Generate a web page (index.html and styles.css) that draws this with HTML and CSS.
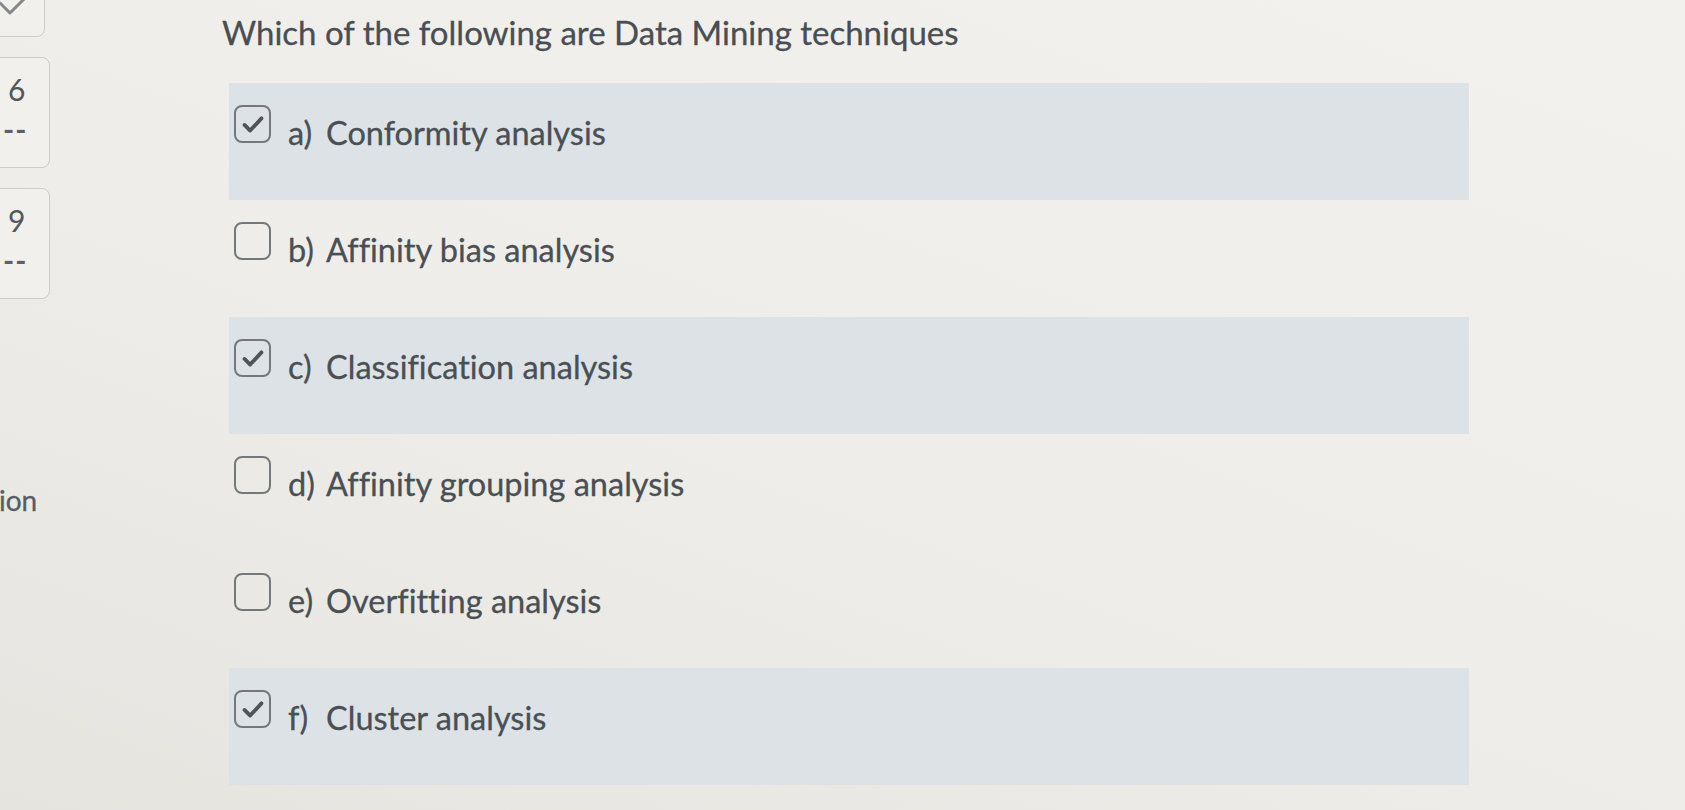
FILE: index.html
```html
<!DOCTYPE html>
<html lang="en">
<head>
  <meta charset="UTF-8">
  <meta name="viewport" content="width=device-width, initial-scale=1.0">
  <title>Quiz Question</title>
  <link rel="stylesheet" href="styles.css">
</head>
<body>
  <div class="page">
    <aside class="rail">
      <div class="qbox qbox-done">
        <svg class="done-mark" width="40" height="30" viewBox="0 0 40 30"><path d="M4 14 L14 24 L34 4" fill="none" stroke="#85878a" stroke-width="3" stroke-linecap="round" stroke-linejoin="round"/></svg>
      </div>
      <div class="qbox">
        <span class="qnum">6</span>
        <span class="qpts">--</span>
      </div>
      <div class="qbox">
        <span class="qnum">9</span>
        <span class="qpts">--</span>
      </div>
      <div class="rail-label">ion</div>
    </aside>

    <main class="question">
      <h1 class="prompt">Which of the following are Data Mining techniques</h1>

      <ul class="choices">
        <li class="choice is-checked">
          <span class="box"><svg width="32" height="32" viewBox="0 0 34 34"><path d="M8 18 L14 24 L26 11" fill="none" stroke="#505357" stroke-width="4" stroke-linecap="round" stroke-linejoin="round"/></svg></span>
          <span class="letter">a)</span>
          <span class="text">Conformity analysis</span>
        </li>
        <li class="choice">
          <span class="box"></span>
          <span class="letter">b)</span>
          <span class="text">Affinity bias analysis</span>
        </li>
        <li class="choice is-checked">
          <span class="box"><svg width="32" height="32" viewBox="0 0 34 34"><path d="M8 18 L14 24 L26 11" fill="none" stroke="#505357" stroke-width="4" stroke-linecap="round" stroke-linejoin="round"/></svg></span>
          <span class="letter">c)</span>
          <span class="text">Classification analysis</span>
        </li>
        <li class="choice">
          <span class="box"></span>
          <span class="letter">d)</span>
          <span class="text">Affinity grouping analysis</span>
        </li>
        <li class="choice">
          <span class="box"></span>
          <span class="letter">e)</span>
          <span class="text">Overfitting analysis</span>
        </li>
        <li class="choice is-checked">
          <span class="box"><svg width="32" height="32" viewBox="0 0 34 34"><path d="M8 18 L14 24 L26 11" fill="none" stroke="#505357" stroke-width="4" stroke-linecap="round" stroke-linejoin="round"/></svg></span>
          <span class="letter">f)</span>
          <span class="text">Cluster analysis</span>
        </li>
      </ul>
    </main>
  </div>
</body>
</html>
```

FILE: styles.css
```css
html, body {
  height: 100%;
}
body {
  margin: 0;
  overflow: hidden;
  font-family: Lato, "Open Sans", Arial, sans-serif;
  font-variant-ligatures: none;
  color: #4a4f54;
  background: linear-gradient(200deg, #f2f1ee 0%, #eeede9 55%, #e6e4df 100%);
}
.page {
  display: flex;
  height: 100%;
}

/* left question rail (cut off by the screen edge) */
.rail {
  width: 50px;
  flex-shrink: 0;
  display: flex;
  flex-direction: column;
  gap: 20px;
}
.qbox {
  display: flex;
  flex-direction: column;
  margin-left: -12px;
  width: 62px;
  height: 111px;
  padding: 14px 0 0 19px;
  box-sizing: border-box;
  border: 1.5px solid #cdccc9;
  border-radius: 8px;
  background: #f1f0ed;
}
.qbox-done {
  margin-top: -70px;
  height: 107px;
  padding: 58px 0 0 7px;
  width: 57px;
}
.qnum {
  font-size: 30px;
  line-height: 34px;
  color: #53575b;
}
.qpts {
  margin: 6px 0 0 -5px;
  font-size: 30px;
  line-height: 34px;
  font-weight: 700;
  letter-spacing: 1px;
  color: #5e6267;
}
.rail-label {
  margin-top: 164px;
  margin-left: -1px;
  font-size: 28px;
  line-height: 34px;
  color: #575c68;
  -webkit-text-stroke: 0.3px currentColor;
}

/* question */
.question {
  flex: 1;
  padding-left: 172px;
}
.prompt {
  margin: 12px 0 0;
  font-size: 33px;
  line-height: 40px;
  font-weight: 400;
  color: #494e53;
  -webkit-text-stroke: 0.3px currentColor;
}
.choices {
  list-style: none;
  margin: 31px 0 0 7px;
  padding: 0;
  width: 1240px;
}
.choice {
  display: flex;
  align-items: flex-start;
  height: 117px;
  box-sizing: border-box;
  padding: 22px 0 0 5px;
}
.choice.is-checked {
  background: #dce2e6;
}
.box {
  display: flex;
  align-items: center;
  justify-content: center;
  width: 37px;
  height: 38px;
  box-sizing: border-box;
  border: 2.5px solid #74787c;
  border-radius: 8px;
  flex-shrink: 0;
}
.letter {
  width: 38px;
  margin: 9px 0 0 17px;
  font-size: 32.5px;
  line-height: 38px;
  -webkit-text-stroke: 0.3px currentColor;
}
.text {
  margin-top: 9px;
  font-size: 32.5px;
  line-height: 38px;
  -webkit-text-stroke: 0.3px currentColor;
}
```
